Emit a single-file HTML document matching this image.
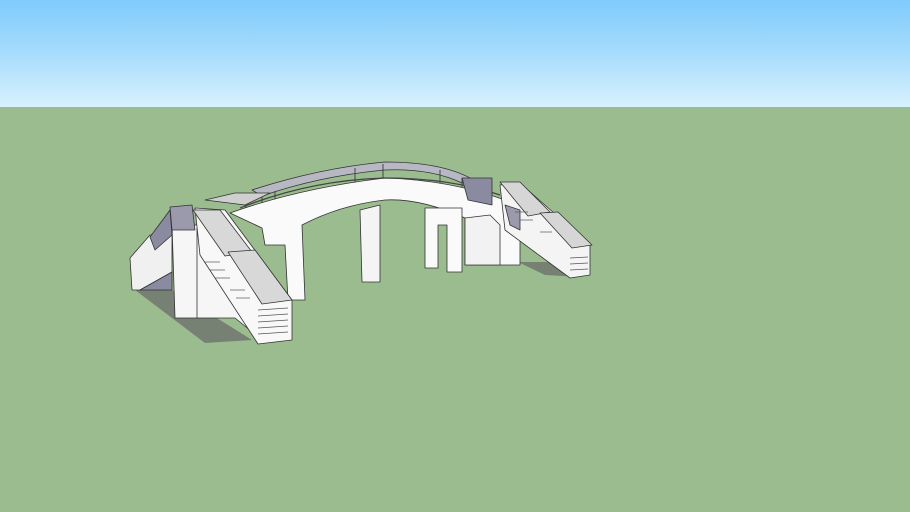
<!DOCTYPE html>
<html><head><style>
html,body{margin:0;padding:0;width:910px;height:512px;overflow:hidden}
body{background:#9bbc8f;position:relative}
#sky{position:absolute;left:0;top:0;width:910px;height:107px;background:linear-gradient(#7fcbfc,#a2dafc 45%,#d8f1fd)}
svg{position:absolute;left:0;top:0}
</style></head><body>
<div id="sky"></div>
<svg width="910" height="512" viewBox="0 0 910 512" stroke="#333" stroke-width="0.8" stroke-linejoin="round">
<polygon points="135,290 172,290 252,340 205,343" fill="#666" stroke="none" opacity="0.7"/>
<polygon points="518,262 560,262 580,277 545,275" fill="#666" stroke="none" opacity="0.7"/>
<!-- canopy over deck -->
<path d="M252,190 Q320,168 385,162 Q440,162 470,178 L462,183 Q430,168 385,170 Q320,176 262,196 Z" fill="#b8b8c4"/>
<g stroke="#444" stroke-width="1">
<line x1="246" y1="196" x2="246" y2="214"/><line x1="262" y1="194" x2="262" y2="210"/><line x1="275" y1="191" x2="275" y2="206"/><line x1="355" y1="168" x2="355" y2="184"/><line x1="383" y1="164" x2="383" y2="180"/><line x1="440" y1="170" x2="440" y2="186"/><line x1="462" y1="178" x2="462" y2="196"/>
</g>
<!-- main arch deck -->
<path d="M230,213 Q300,188 385,178 Q450,180 505,200 L505,220 L520,230 L520,265 L465,265 L465,218 Q420,198 385,200 Q340,205 302,225 L305,300 L288,300 L285,245 L265,245 L262,228 Z" fill="#fafafa"/>
<path d="M240,208 Q310,180 385,178 Q450,178 500,195" fill="none" stroke="#444" stroke-width="1.2"/>
<!-- piers -->
<polygon points="360,210 380,205 380,282 362,282" fill="#f4f4f4"/>
<polygon points="425,208 462,208 462,272 447,272 447,225 438,225 438,268 425,268" fill="#fafafa"/>
<polygon points="465,218 490,215 500,225 500,265 465,265" fill="#f2f2f2"/>
<!-- left outer stair -->
<polygon points="130,258 150,235 172,232 172,272 140,290 132,290" fill="#f0f0f0"/>
<polygon points="150,237 170,210 172,235 155,250" fill="#8a8aa0"/>
<polygon points="140,290 172,272 172,290" fill="#8a8aa0"/>
<!-- left tower -->
<polygon points="172,225 200,225 262,300 262,340 235,318 175,318" fill="#f6f6f6"/>
<line x1="197" y1="228" x2="197" y2="318"/>
<polygon points="170,207 192,205 195,230 172,230" fill="#9a9aac"/>
<!-- left stairs -->
<polygon points="195,208 225,210 292,300 292,340 258,344 200,255" fill="#f8f8f8"/>
<polygon points="193,210 220,210 252,252 225,256" fill="#d8d8d8"/>
<polygon points="228,252 255,250 292,300 262,304" fill="#d8d8d8"/>
<g stroke="#555" stroke-width="0.7">
<line x1="258" y1="310" x2="288" y2="308"/><line x1="258" y1="316" x2="288" y2="314"/><line x1="258" y1="322" x2="288" y2="320"/><line x1="258" y1="328" x2="288" y2="326"/><line x1="258" y1="334" x2="288" y2="332"/>
<line x1="205" y1="262" x2="220" y2="262"/><line x1="210" y1="270" x2="225" y2="270"/><line x1="215" y1="278" x2="230" y2="278"/><line x1="230" y1="290" x2="245" y2="290"/><line x1="236" y1="298" x2="250" y2="298"/>
</g>
<polygon points="205,200 235,193 270,193 245,205" fill="#cfcfcf"/>
<!-- right stairs -->
<polygon points="500,185 520,183 590,245 590,275 570,278 505,230" fill="#f4f4f4"/>
<polygon points="500,182 520,182 550,212 528,216" fill="#d6d6d6"/>
<polygon points="540,213 558,212 592,245 572,248" fill="#d6d6d6"/>
<polygon points="462,178 492,178 492,205 468,200" fill="#8a8aa0"/>
<polygon points="505,205 520,210 520,230 510,225" fill="#9a9aac"/>
<g stroke="#555" stroke-width="0.7">
<line x1="570" y1="258" x2="588" y2="257"/><line x1="570" y1="264" x2="588" y2="263"/><line x1="570" y1="270" x2="588" y2="269"/>
<line x1="515" y1="212" x2="528" y2="212"/><line x1="520" y1="220" x2="533" y2="220"/><line x1="540" y1="232" x2="552" y2="232"/>
</g>
</svg>
</body></html>
